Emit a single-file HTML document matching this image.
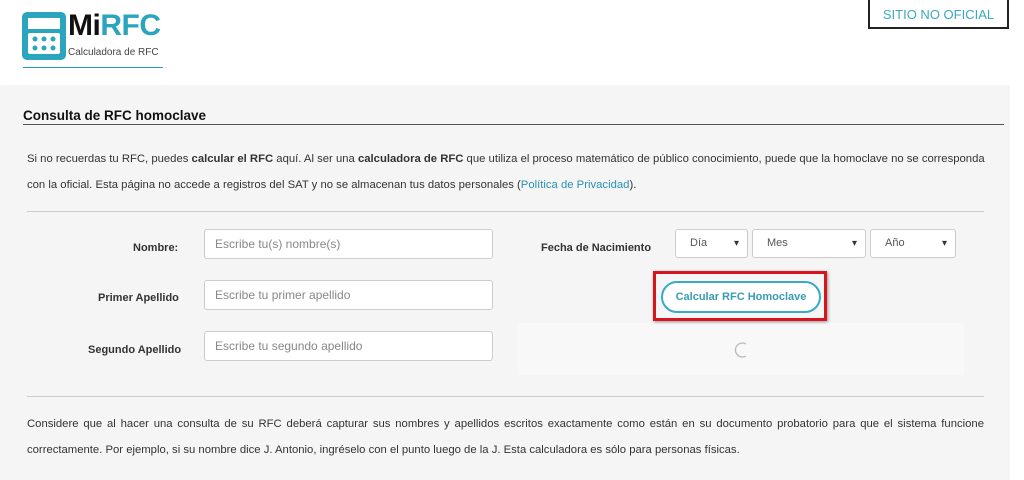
<!DOCTYPE html>
<html><head><meta charset="utf-8"><style>
*{margin:0;padding:0;box-sizing:border-box}
body{width:1024px;height:480px;background:#f5f5f5;font-family:"Liberation Sans",sans-serif;color:#333;position:relative;overflow:hidden}
.hdr{position:absolute;left:0;top:0;width:1024px;height:85px;background:#fff}
.abs{position:absolute}
.lbl{font-size:11px;font-weight:bold;color:#333}
.inp{position:absolute;background:#fff;border:1px solid #ccc;border-radius:3px;font-size:12px;color:#888;padding-left:10px;line-height:28px;height:30px}
.sel{position:absolute;background:#fff;border:1px solid #ccc;border-radius:3px;font-size:11px;color:#555;padding-left:14px;line-height:27px;height:29px}
.sel:after{content:"▾";position:absolute;right:8px;top:0;font-size:10px;color:#333}
p{font-size:11.3px;color:#333}
</style></head><body>
<div class="hdr"></div>
<div class="abs" style="right:0;top:0;width:14px;height:480px;background:#fff"></div>
<svg class="abs" style="left:22px;top:12px" width="44" height="48" viewBox="0 0 44 48">
<rect x="0" y="0" width="44" height="48" rx="5" fill="#2aa5bd"/>
<rect x="6" y="6" width="32" height="11" fill="#fff"/>
<rect x="6" y="21" width="32" height="21" rx="2" fill="#fff"/>
<g fill="#2aa5bd"><circle cx="13" cy="27" r="2.5"/><circle cx="22" cy="27" r="2.5"/><circle cx="31" cy="27" r="2.5"/><circle cx="13" cy="36" r="2.5"/><circle cx="22" cy="36" r="2.5"/><circle cx="31" cy="36" r="2.5"/></g>
</svg>
<div class="abs" style="left:68px;top:9px;font-size:30px;font-weight:bold;letter-spacing:-0.5px"><span style="color:#111">Mi</span><span style="color:#2aa5bd">RFC</span></div>
<div class="abs" style="left:68px;top:47px;font-size:10px;color:#444">Calculadora de RFC</div>
<div class="abs" style="left:23px;top:67px;width:140px;height:1px;background:#1f9fb8"></div>
<div class="abs" style="left:868px;top:-2px;width:141px;height:31px;border:2px solid #222;background:#fff;color:#3aa9c2;font-size:13px;text-align:center;line-height:30px">SITIO NO OFICIAL</div>
<div class="abs" style="left:23px;top:108px;font-size:13.5px;font-weight:bold;color:#111">Consulta de RFC homoclave</div>
<div class="abs" style="left:23px;top:124px;width:981px;height:1px;background:#555"></div>
<p class="abs" style="left:27px;top:153px;width:960px">Si no recuerdas tu RFC, puedes <b>calcular el RFC</b> aquí. Al ser una <b>calculadora de RFC</b> que utiliza el proceso matemático de público conocimiento, puede que la homoclave no se corresponda</p>
<p class="abs" style="left:27px;top:179px">con la oficial. Esta página no accede a registros del SAT y no se almacenan tus datos personales (<span style="color:#2a8fb5">Política de Privacidad</span>).</p>
<div class="abs" style="left:27px;top:211px;width:957px;height:1px;background:#ccc"></div>
<div class="abs lbl" style="left:133px;top:242px">Nombre:</div>
<div class="inp" style="left:204px;top:229px;width:289px">Escribe tu(s) nombre(s)</div>
<div class="abs lbl" style="left:98px;top:292px">Primer Apellido</div>
<div class="inp" style="left:204px;top:280px;width:289px">Escribe tu primer apellido</div>
<div class="abs lbl" style="left:88px;top:344px">Segundo Apellido</div>
<div class="inp" style="left:204px;top:331px;width:289px">Escribe tu segundo apellido</div>
<div class="abs lbl" style="left:541px;top:242px">Fecha de Nacimiento</div>
<div class="sel" style="left:675px;top:229px;width:73px">Día</div>
<div class="sel" style="left:752px;top:229px;width:114px">Mes</div>
<div class="sel" style="left:870px;top:229px;width:86px">Año</div>
<div class="abs" style="left:517px;top:323px;width:447px;height:52px;background:#f8f8f8"></div>
<svg class="abs" style="left:732px;top:341px" width="18" height="18"><path d="M14 3 A7 7 0 1 0 14 15" fill="none" stroke="#bbb" stroke-width="1.3"/></svg>
<div class="abs" style="left:653px;top:271px;width:174px;height:50px;border:3px solid #d8141c;box-shadow:1px 1px 3px rgba(0,0,0,.4)"></div>
<div class="abs" style="left:661px;top:281px;width:160px;height:32px;border:2px solid #3aa9c2;border-radius:16px;background:#fff;color:#3a9bb5;font-size:11px;font-weight:bold;text-align:center;line-height:28px">Calcular RFC Homoclave</div>
<div class="abs" style="left:27px;top:396px;width:957px;height:1px;background:#ccc"></div>
<p class="abs" style="left:27px;top:418px;width:957px;text-align:justify;text-align-last:justify">Considere que al hacer una consulta de su RFC deberá capturar sus nombres y apellidos escritos exactamente como están en su documento probatorio para que el sistema funcione</p>
<p class="abs" style="left:27px;top:444px">correctamente. Por ejemplo, si su nombre dice J. Antonio, ingréselo con el punto luego de la J. Esta calculadora es sólo para personas físicas.</p>
</body></html>
